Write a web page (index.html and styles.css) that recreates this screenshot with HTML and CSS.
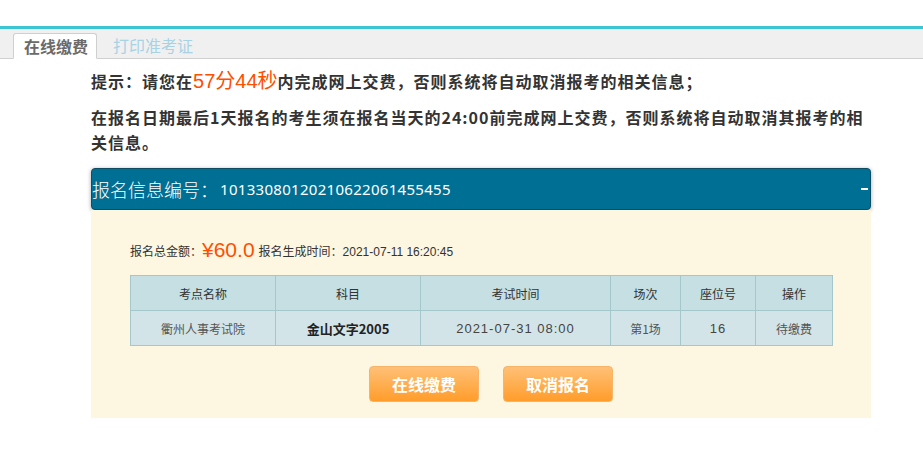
FILE: index.html
```html
<!DOCTYPE html>
<html lang="zh-CN">
<head>
<meta charset="utf-8">
<title>在线缴费</title>
<link rel="stylesheet" href="styles.css">
</head>
<body>
<div class="topline"></div>
<div class="tabs">
  <div class="tab active">在线缴费</div>
  <div class="tab">打印准考证</div>
</div>
<div class="content">
  <p class="tip">提示：请您在<span class="countdown">57分44秒</span>内完成网上交费，否则系统将自动取消报考的相关信息；</p>
  <p class="note">在报名日期最后1天报名的考生须在报名当天的24:00前完成网上交费，否则系统将自动取消其报考的相关信息。</p>
  <div class="panel-head">
    <span class="head-label">报名信息编号：</span><span class="head-num">10133080120210622061455455</span>
    <span class="collapse"></span>
  </div>
  <div class="panel-body">
    <div class="summary">
      <span>报名总金额：</span><span class="amount">¥60.0</span><span>报名生成时间：<span class="time">2021-07-11 16:20:45</span></span>
    </div>
    <table class="exam">
      <thead>
        <tr><th class="c1">考点名称</th><th class="c2">科目</th><th class="c3">考试时间</th><th class="c4">场次</th><th class="c5">座位号</th><th class="c6">操作</th></tr>
      </thead>
      <tbody>
        <tr><td>衢州人事考试院</td><td class="subject">金山文字2005</td><td class="num">2021-07-31 08:00</td><td>第1场</td><td class="num">16</td><td>待缴费</td></tr>
      </tbody>
    </table>
    <div class="actions">
      <button class="btn">在线缴费</button>
      <button class="btn">取消报名</button>
    </div>
  </div>
</div>
</body>
</html>
```
FILE: styles.css
```css
* { box-sizing: border-box; }
html, body { margin: 0; padding: 0; background: #fff; }
body {
  font-family: "Noto Sans CJK SC", "Noto Sans", sans-serif;
  color: #333;
}
.topline {
  margin-top: 26px;
  height: 3px;
  background: #3cc6d3;
}
.tabs {
  height: 30px;
  background: #f0f0f0;
  border-bottom: 1px solid #d0d0d0;
  display: flex;
  align-items: flex-end;
  padding-left: 13px;
  gap: 6px;
}
.tab {
  height: 26px;
  line-height: 24px;
  padding: 0 9px 0 10px;
  font-size: 16px;
  color: #a9d2e4;
  margin-bottom: -1px;
}
.tab.active {
  background: #fff;
  border: 1px solid #cfcfcf;
  border-bottom: 1px solid #fff;
  border-radius: 3px 3px 0 0;
  color: #6a6a6a;
  font-weight: bold;
  padding: 0 8px 0 10px;
}
.content {
  width: 780px;
  margin-left: 91px;
}
.tip {
  margin: 10px 0 0;
  font-size: 16px;
  font-weight: bold;
  line-height: 24px;
  letter-spacing: 1px;
}
.countdown {
  color: #ff4e00;
  font-weight: normal;
  font-size: 20px;
  letter-spacing: 0;
  font-family: "Liberation Sans", "Noto Sans CJK SC", sans-serif;
}
.note {
  margin: 12px 0 0;
  font-size: 16px;
  font-weight: bold;
  line-height: 25px;
  letter-spacing: 1px;
}
.panel-head {
  margin-top: 13px;
  height: 42px;
  background: #006f94;
  border: 1px solid #0e4d63;
  border-radius: 4px;
  box-shadow: 0 1px 4px rgba(0,0,0,0.35);
  color: #fff;
  display: flex;
  align-items: center;
}
.head-label { font-size: 18px; font-weight: 300; }
.head-num {
  font-size: 15px;
  margin-left: 2px;
  letter-spacing: 0.3px;
  font-family: "Noto Sans", sans-serif;
}
.collapse {
  margin-left: auto;
  margin-right: 2px;
  width: 7px;
  height: 1.5px;
  background: #fff;
}
.panel-body {
  background: #fdf7e1;
  height: 208px;
  padding: 28px 39px 0;
}
.summary {
  display: flex;
  align-items: center;
  font-size: 12px;
  color: #333;
  height: 24px;
}
.summary .time {
  font-family: "Liberation Sans", sans-serif;
  font-size: 12px;
}
.amount {
  color: #ff4e00;
  font-size: 21px;
  margin: 0 4px 0 0;
  font-family: "Liberation Sans", sans-serif;
}
.exam {
  margin-top: 13px;
  width: 702px;
  border-collapse: collapse;
  font-size: 12px;
  table-layout: fixed;
}
.exam th, .exam td {
  border: 1px solid #a3c7cb;
  text-align: center;
  height: 35px;
  padding: 0;
}
.exam th {
  background: #c5dfe3;
  color: #333;
  font-weight: normal;
}
.exam td {
  background: #d3e4e8;
  color: #555;
}
.exam td.subject { color: #222; font-weight: bold; font-size: 13px; }
.exam td.num {
  font-family: "Liberation Sans", sans-serif;
  font-size: 13px;
  letter-spacing: 1px;
  color: #444;
}
.c1 { width: 145px; }
.c2 { width: 145px; }
.c3 { width: 190px; }
.c4 { width: 70px; }
.c5 { width: 75px; }
.c6 { width: 77px; }
.actions {
  display: flex;
  justify-content: center;
  gap: 24px;
  margin-top: 20px;
  padding-left: 20px;
}
.btn {
  width: 110px;
  height: 36px;
  border: 1px solid #f7b468;
  border-radius: 4px;
  background: linear-gradient(#ffc077, #ff9d2b);
  color: #fff;
  font-family: "Noto Sans CJK SC", sans-serif;
  font-size: 16px;
  font-weight: bold;
  padding: 0;
}
```
